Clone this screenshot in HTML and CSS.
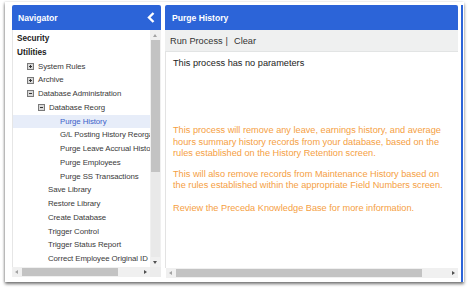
FILE: index.html
```html
<!DOCTYPE html>
<html>
<head>
<meta charset="utf-8">
<link rel="stylesheet" href="styles.css">
</head>
<body>
<div class="frame">
  <div class="nav">
    <div class="nav-head">
      <span class="title">Navigator</span>
      <svg class="chev" width="8" height="11" viewBox="0 0 8 11"><path d="M6.5 1 L2 5.5 L6.5 10" fill="none" stroke="#fff" stroke-width="2.4"/></svg>
    </div>
    <div class="nav-body">
      <ul class="tree">
        <li class="row bold l0">Security</li>
        <li class="row bold l0">Utilities</li>
        <li class="row l1"><span class="box plus"></span>System Rules</li>
        <li class="row l1"><span class="box plus"></span>Archive</li>
        <li class="row l1"><span class="box minus"></span>Database Administration</li>
        <li class="row l2"><span class="box minus"></span>Database Reorg</li>
        <li class="row l3 sel">Purge History</li>
        <li class="row l3">G/L Posting History Reorganisation</li>
        <li class="row l3">Purge Leave Accrual History</li>
        <li class="row l3">Purge Employees</li>
        <li class="row l3">Purge SS Transactions</li>
        <li class="row l2t">Save Library</li>
        <li class="row l2t">Restore Library</li>
        <li class="row l2t">Create Database</li>
        <li class="row l2t">Trigger Control</li>
        <li class="row l2t">Trigger Status Report</li>
        <li class="row l2t">Correct Employee Original ID</li>
      </ul>
      <div class="vscroll">
        <span class="arr up"></span>
        <span class="vthumb"></span>
        <span class="vfill"></span>
        <span class="arr down"></span>
      </div>
    </div>
    <div class="hbar">
      <div class="hscroll">
        <span class="harr left"></span>
        <span class="hthumb nav-thumb"></span>
        <span class="hfill"></span>
        <span class="harr right"></span>
      </div>
      <div class="corner"></div>
    </div>
  </div>
  <div class="main">
    <div class="main-head">Purge History</div>
    <div class="toolbar"><span>Run Process</span><span class="sep">|</span><span>Clear</span></div>
    <div class="content">
      <p class="noparam">This process has no parameters</p>
      <div class="notes">
        <p>This process will remove any leave, earnings history, and average hours summary history records from your database, based on the rules established on the History Retention screen.</p>
        <p>This will also remove records from Maintenance History based on the rules established within the appropriate Field Numbers screen.</p>
        <p class="last">Review the Preceda Knowledge Base for more information.</p>
      </div>
    </div>
    <div class="hscroll main-scroll">
      <span class="harr left"></span>
      <span class="hthumb main-thumb"></span>
      <span class="hfill"></span>
      <span class="harr right"></span>
    </div>
  </div>
  <div class="edge"></div>
</div>
</body>
</html>
```
FILE: styles.css
```css
* { box-sizing: border-box; }
html, body { margin: 0; padding: 0; background: #fff; }
body { width: 469px; height: 293px; overflow: hidden; font-family: "Liberation Sans", Arial, sans-serif; }

.frame {
  margin: 2px 0 0 5px;
  width: 459px;
  height: 280px;
  padding: 3px 0 2px 7px;
  display: flex;
  background: #fff;
  box-shadow: 0 2px 3px rgba(0,0,0,0.55), -1px 0 2px rgba(0,0,0,0.12);
}

.nav { width: 149px; display: flex; flex-direction: column; }
.nav-head {
  height: 25px; background: #2c64d8; color: #fff;
  display: flex; align-items: center; justify-content: space-between;
  padding: 0 6px 0 6px;
  border-radius: 2px 2px 0 0;
}
.title, .main-head { font-weight: bold; font-size: 8.6px; }
.chev { display: block; margin-top: -1px; }

.nav-body { height: 237px; display: flex; border-left: 1px solid #e6e6e6; }
.tree {
  list-style: none; margin: 0; padding: 2px 0 0 0; flex: 1; overflow: hidden;
  font-family: "Liberation Sans", sans-serif;
  font-size: 7.85px; letter-spacing: -0.08px; color: #3a3a3a;
}
.row { height: 13.75px; line-height: 13.75px; white-space: nowrap; display: flex; align-items: center; }
.bold { font-weight: bold; color: #222; font-size: 8.2px; letter-spacing: 0; }
.l0 { padding-left: 4px; }
.l1 { padding-left: 14px; }
.l2 { padding-left: 25px; }
.l2t { padding-left: 35px; }
.l3 { padding-left: 47px; }
.sel { background: #e7edf9; color: #3d62c9; }

.box {
  width: 7px; height: 7px; margin-right: 4px; flex: none;
  border: 1px solid #7a7a7a; background: #d9d9d9; position: relative;
}
.box::before {
  content: ""; position: absolute; left: 1px; top: 2px; width: 3px; height: 1px; background: #333;
}
.plus::after {
  content: ""; position: absolute; left: 2px; top: 1px; width: 1px; height: 3px; background: #333;
}

.vscroll { width: 11px; display: flex; flex-direction: column; background: #f0f0f0; }
.arr { height: 10px; flex: none; position: relative; }
.arr::after { content: ""; position: absolute; left: 3px; width: 0; height: 0; border-left: 2.5px solid transparent; border-right: 2.5px solid transparent; }
.up::after { top: 4px; border-bottom: 3px solid #a3a3a3; }
.down::after { top: 4px; border-top: 3px solid #505050; }
.vthumb { height: 132px; margin: 0 1px; background: #c3c3c3; flex: none; }
.vfill { flex: 1; background: #e9e9e9; margin: 0 1px; }

.hbar { height: 10px; display: flex; }
.hscroll { flex: 1; display: flex; background: #f0f0f0; height: 10px; }
.harr { width: 10px; flex: none; position: relative; }
.harr::after { content: ""; position: absolute; top: 2.5px; width: 0; height: 0; border-top: 2.5px solid transparent; border-bottom: 2.5px solid transparent; }
.left::after { left: 3px; border-right: 3px solid #a3a3a3; }
.right::after { left: 4px; border-left: 3px solid #505050; }
.hthumb { background: #c3c3c3; margin: 1px 0; flex: none; }
.hfill { flex: 1; }
.nav-thumb { width: 96px; }
.corner { width: 11px; background: #ececec; }

.main { width: 293px; margin-left: 4px; display: flex; flex-direction: column; }
.main-head {
  height: 25px; background: #2c64d8; color: #fff;
  display: flex; align-items: center; padding-left: 7px;
  border-radius: 2px 2px 0 0;
}
.toolbar {
  height: 22px; background: #eff0f0; border-bottom: 1px solid #e2e4e4;
  display: flex; align-items: center; padding-left: 5px;
  font-size: 9.2px; color: #333;
}
.sep { margin: 0 6px 0 3px; }
.content { flex: 1; border-left: 1px solid #e3e3e3; padding: 5px 12px 0 7px; }
.content p { margin: 0; }
.noparam { font-size: 9.2px; color: #222; line-height: 12px; }
.notes { margin-top: 56px; font-size: 9.2px; color: #f5a043; line-height: 11.7px; }
.notes p + p { margin-top: 8.5px; }
.notes p.last { margin-top: 11px; }
.main-scroll { flex: none; margin: 0 0 2px 1px; }
.main-thumb { width: 246px; }

.edge { width: 2px; margin-left: 3px; background: #2c64d8; margin-bottom: -2px; }
```
